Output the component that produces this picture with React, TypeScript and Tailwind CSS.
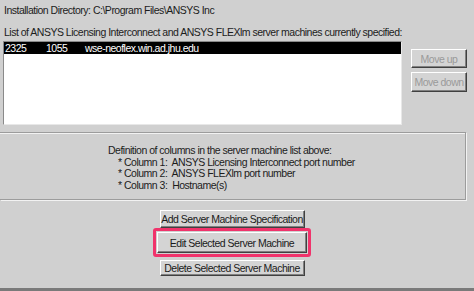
const font = { fontFamily: '"Liberation Sans", Arial, sans-serif' };

function ClassicButton({
  children,
  disabled,
  className = "",
}: {
  children: React.ReactNode;
  disabled?: boolean;
  className?: string;
}) {
  return (
    <div
      className={`flex items-center justify-center whitespace-nowrap border border-t-white border-l-white border-r-[#404040] border-b-[#404040] bg-[#d4d4d4] shadow-[inset_-1px_-1px_0_#808080] ${
        disabled ? "text-[#9a9a9a]" : "text-[#1a1a1a]"
      } ${className}`}
    >
      {children}
    </div>
  );
}

export default function App() {
  return (
    <div
      className="w-[474px] h-[291px] overflow-hidden bg-[#d0d0d0] text-[10.5px] tracking-[-0.5px] leading-[12px] text-[#1c1c1c] flex flex-col whitespace-nowrap"
      style={font}
    >
      <div className="pl-[4px] pt-[4px] h-[26px]">Installation Directory: C:\Program Files\ANSYS Inc</div>
      <div className="pl-[4px] h-[15px]">
        List of ANSYS Licensing Interconnect and ANSYS FLEXlm server machines currently specified:
      </div>

      <div className="flex">
        <div className="ml-[3px] w-[399px] h-[84px] bg-white border border-[#8a8a8a] border-r-[#e8e8e8] border-b-[#e8e8e8]">
          <div className="flex h-[12px] bg-black text-white items-center">
            <span className="w-[42px] pl-[1px]">2325</span>
            <span className="w-[39px]">1055</span>
            <span>wse-neoflex.win.ad.jhu.edu</span>
          </div>
        </div>
        <div className="ml-[9px] pt-[8px] flex flex-col gap-[4px]">
          <ClassicButton disabled className="w-[56px] h-[19px]">
            Move up
          </ClassicButton>
          <ClassicButton disabled className="w-[56px] h-[20px]">
            Move down
          </ClassicButton>
        </div>
      </div>

      <div className="mt-[7px] w-[466px] h-[68px] border border-[#9c9c9c] border-l-0 shadow-[inset_0_1px_0_#f2f2f2,1px_1px_0_#f2f2f2] flex flex-col pl-[108px] pt-[11px]">
        <div className="h-[11.5px]">Definition of columns in the server machine list above:</div>
        <div className="pl-[10px] h-[11.5px]">* Column 1:&nbsp; ANSYS Licensing Interconnect port number</div>
        <div className="pl-[10px] h-[11.5px]">* Column 2:&nbsp; ANSYS FLEXlm port number</div>
        <div className="pl-[10px] h-[11.5px]">* Column 3:&nbsp; Hostname(s)</div>
      </div>

      <div className="flex-1 flex flex-col items-center pt-[10px] pr-[10px]">
        <ClassicButton className="w-[145px] h-[18px]">Add Server Machine Specification</ClassicButton>
        <div className="p-[1px] rounded-[3px] border-[3px] border-[#f0336b]">
          <ClassicButton className="w-[150px] h-[21px]">Edit Selected Server Machine</ClassicButton>
        </div>
        <ClassicButton className="mt-[3px] w-[145px] h-[16px]">Delete Selected Server Machine</ClassicButton>
      </div>
      <div className="h-[3px] bg-[#7a7a7a]" />
    </div>
  );
}
